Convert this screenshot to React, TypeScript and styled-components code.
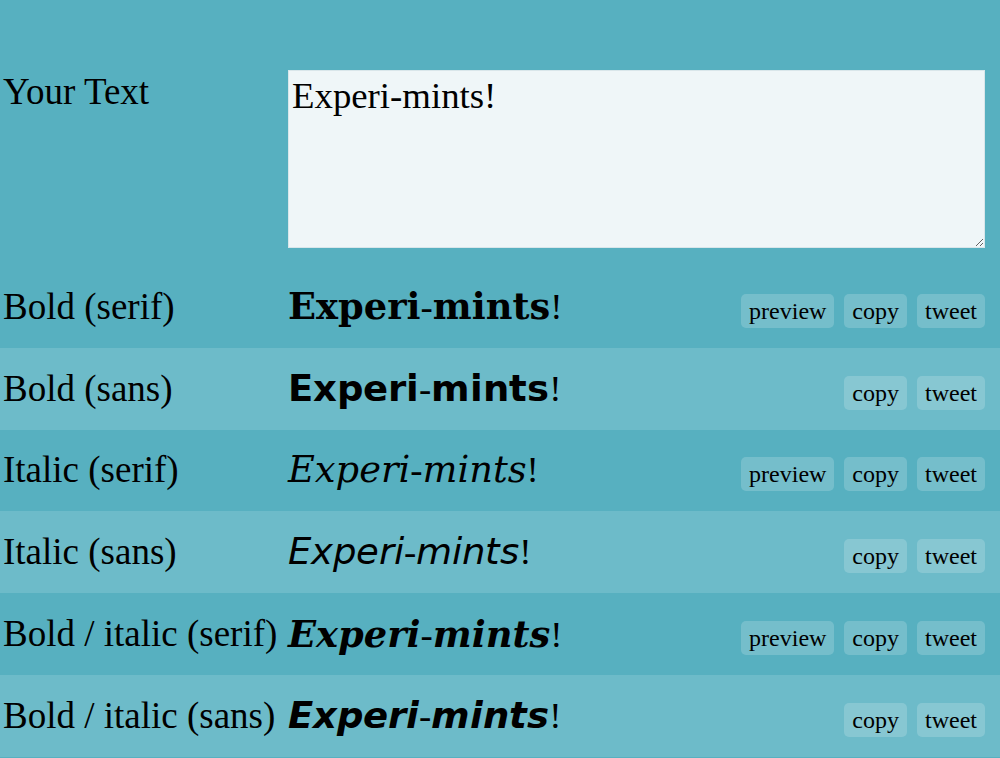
import { useState } from "react";
import styled, { createGlobalStyle } from "styled-components";

const GlobalStyle = createGlobalStyle`
    html, body {
        margin: 0;
        padding: 0;
        background: #57b0c0;
        color: #000;
        font-family: "Liberation Serif", "DejaVu Serif", serif;
    }
`

const Page = styled.div`
    padding-top: 70px;
    width: 1000px;
`

const InputRow = styled.div`
    display: grid;
    grid-template-columns: 288px 1fr;
    padding-right: 15px;
    margin-bottom: 18px;
`

const Label = styled.div`
    font-size: 37px;
    padding-left: 3px;
    line-height: 42px;
    white-space: nowrap;
`

const TopLabel = styled(Label)`
    padding-top: 1px;
`

const TextBox = styled.textarea`
    box-sizing: border-box;
    width: 697px;
    height: 178px;
    margin: 0;
    padding: 4px 3px;
    border: 1px solid #d9e6ea;
    background: #eff6f8;
    color: #000;
    font-family: "Liberation Serif", serif;
    font-size: 36.8px;
    line-height: 42px;
    outline: none;
`

const StyleRow = styled.div<{ $light: boolean }>`
    display: grid;
    grid-template-columns: 288px 1fr auto;
    align-items: center;
    height: 81.8px;
    padding-right: 15px;
    background: ${(p) => (p.$light ? "#6dbbc9" : "#57b0c0")};
`

const Sample = styled.div`
    font-family: "Liberation Serif", serif;
    font-size: 36.8px;
    line-height: 42px;
    white-space: nowrap;
`

// the math letters need the DejaVu face that actually carries them
const Letters = styled.span<{ $sans: boolean; $bold: boolean; $italic: boolean }>`
    font-family: ${(p) => (p.$sans ? '"DejaVu Sans"' : '"DejaVu Serif"')}, "DejaVu Sans", serif;
    font-weight: ${(p) => (p.$bold ? 700 : 400)};
    font-style: ${(p) => (p.$italic ? "italic" : "normal")};
`

const Actions = styled.div`
    display: flex;
    gap: 10px;
    justify-content: flex-end;
    padding-top: 8px;
`

const ActionButton = styled.button`
    height: 34px;
    padding: 0 8px;
    border: none;
    border-radius: 5px;
    background: rgba(255, 255, 255, 0.18);
    color: #000;
    font-family: "Liberation Serif", serif;
    font-size: 24px;
    line-height: 34px;
    cursor: pointer;
`

// mathematical alphanumeric blocks: capital A offset, small a offset
const blocks: Record<string, [number, number]> = {
    boldSerif: [0x1d400, 0x1d41a],
    italicSerif: [0x1d434, 0x1d44e],
    boldItalicSerif: [0x1d468, 0x1d482],
    boldSans: [0x1d5d4, 0x1d5ee],
    italicSans: [0x1d608, 0x1d622],
    boldItalicSans: [0x1d63c, 0x1d656],
}

function convertChar(ch: string, kind: string) {
    const [upper, lower] = blocks[kind]
    const c = ch.charCodeAt(0)
    if (c >= 65 && c <= 90) return String.fromCodePoint(upper + c - 65)
    if (c >= 97 && c <= 122) {
        // italic small h has a hole in the block
        if (kind == "italicSerif" && ch == "h") return "\u210e"
        return String.fromCodePoint(lower + c - 97)
    }
    return null
}

// split into runs of converted letters and plain characters
function toRuns(text: string, kind: string) {
    const runs: { math: boolean; text: string }[] = []
    for (const ch of Array.from(text)) {
        const out = convertChar(ch, kind)
        const math = out != null
        const last = runs[runs.length - 1]
        if (last && last.math == math) last.text += out ?? ch
        else runs.push({ math, text: out ?? ch })
    }
    return runs
}

const styles = [
    { label: "Bold (serif)", kind: "boldSerif", sans: false, bold: true, italic: false, preview: true },
    { label: "Bold (sans)", kind: "boldSans", sans: true, bold: false, italic: false, preview: false },
    { label: "Italic (serif)", kind: "italicSerif", sans: false, bold: false, italic: false, preview: true },
    { label: "Italic (sans)", kind: "italicSans", sans: true, bold: false, italic: false, preview: false },
    { label: "Bold / italic (serif)", kind: "boldItalicSerif", sans: false, bold: true, italic: true, preview: true },
    { label: "Bold / italic (sans)", kind: "boldItalicSans", sans: true, bold: false, italic: false, preview: false },
]

export default function App() {
    const [text, setText] = useState("Experi-mints!")

    return (
        <Page>
            <GlobalStyle />
            <InputRow>
                <TopLabel>Your Text</TopLabel>
                <TextBox value={text} onChange={(e) => setText(e.target.value)} />
            </InputRow>
            {styles.map((s, index) => (
                <StyleRow key={s.kind} $light={index % 2 == 1}>
                    <Label>{s.label}</Label>
                    <Sample>
                        {toRuns(text, s.kind).map((run, i) =>
                            run.math
                                ? <Letters key={i} $sans={s.sans} $bold={s.bold} $italic={s.italic}>{run.text}</Letters>
                                : <span key={i}>{run.text}</span>
                        )}
                    </Sample>
                    <Actions>
                        {s.preview && <ActionButton>preview</ActionButton>}
                        <ActionButton>copy</ActionButton>
                        <ActionButton>tweet</ActionButton>
                    </Actions>
                </StyleRow>
            ))}
        </Page>
    )
}
